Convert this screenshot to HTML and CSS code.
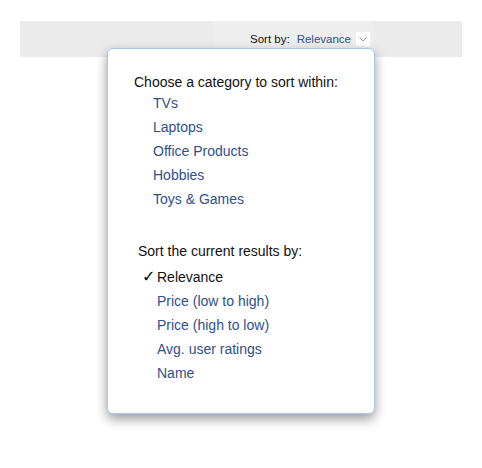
FILE: index.html
```html
<!DOCTYPE html>
<html>
<head>
<meta charset="utf-8">
<link rel="stylesheet" href="styles.css">
</head>
<body>
<div class="page">
  <div class="bar">
    <div class="sort">
      <span class="sort-label">Sort by:</span>
      <span class="sort-value">Relevance</span>
      <span class="sort-arrow">
        <svg width="8" height="5" viewBox="0 0 8 5"><path d="M0.5 0.5 L4 4 L7.5 0.5" fill="none" stroke="#9a9a9a" stroke-width="1"/></svg>
      </span>
    </div>
  </div>
  <div class="popup">
    <div class="heading first">Choose a category to sort within:</div>
    <ul class="cats">
      <li>TVs</li>
      <li>Laptops</li>
      <li>Office Products</li>
      <li>Hobbies</li>
      <li>Toys &amp; Games</li>
    </ul>
    <div class="heading second">Sort the current results by:</div>
    <ul class="sorts">
      <li class="selected"><span class="check">✓</span><span>Relevance</span></li>
      <li><span class="check"></span><span class="link">Price (low to high)</span></li>
      <li><span class="check"></span><span class="link">Price (high to low)</span></li>
      <li><span class="check"></span><span class="link">Avg. user ratings</span></li>
      <li><span class="check"></span><span class="link">Name</span></li>
    </ul>
  </div>
</div>
</body>
</html>
```
FILE: styles.css
```css
html, body {
  margin: 0;
  padding: 0;
  background: #ffffff;
}
body {
  font-family: "Liberation Sans", Arial, sans-serif;
  font-size: 14px;
  color: #111111;
}
.page {
  position: relative;
  width: 482px;
  height: 468px;
  padding-top: 21px;
  box-sizing: border-box;
}
.bar {
  margin: 0 20px;
  height: 36px;
  background: #ebebeb;
  display: flex;
  justify-content: flex-end;
  padding-right: 88px;
}
.sort {
  display: flex;
  align-items: center;
  background: #eeeeef;
  padding-left: 37px;
  padding-right: 4px;
  font-size: 11.5px;
}
.sort-label {
  color: #111111;
}
.sort-value {
  color: #2f4f8f;
  margin-left: 7px;
}
.sort-arrow {
  margin-left: 5px;
  width: 14px;
  height: 14px;
  background: #ffffff;
  display: flex;
  align-items: center;
  justify-content: center;
}
.popup {
  position: absolute;
  left: 107px;
  top: 48px;
  width: 268px;
  height: 366px;
  box-sizing: border-box;
  background: #ffffff;
  border: 1px solid #a8c8e6;
  border-radius: 6px;
  box-shadow: 0 5px 12px rgba(0, 0, 0, 0.4);
  padding: 24px 0 0 26px;
}
.heading {
  line-height: 18px;
  color: #111111;
}
.cats, .sorts {
  list-style: none;
  margin: 0;
  padding: 0;
}
.cats li {
  line-height: 24px;
  padding-left: 19px;
  color: #2f4f8f;
}
.heading.second {
  margin-top: 31px;
  padding-left: 4px;
}
.sorts {
  margin-top: 5px;
}
.sorts li {
  display: flex;
  line-height: 24px;
  padding-left: 8px;
}
.check {
  width: 15px;
  font-family: "DejaVu Sans", sans-serif;
  font-weight: bold;
  font-size: 16px;
  color: #000000;
}
.selected {
  color: #111111;
}
.link {
  color: #2f4f8f;
}
```
